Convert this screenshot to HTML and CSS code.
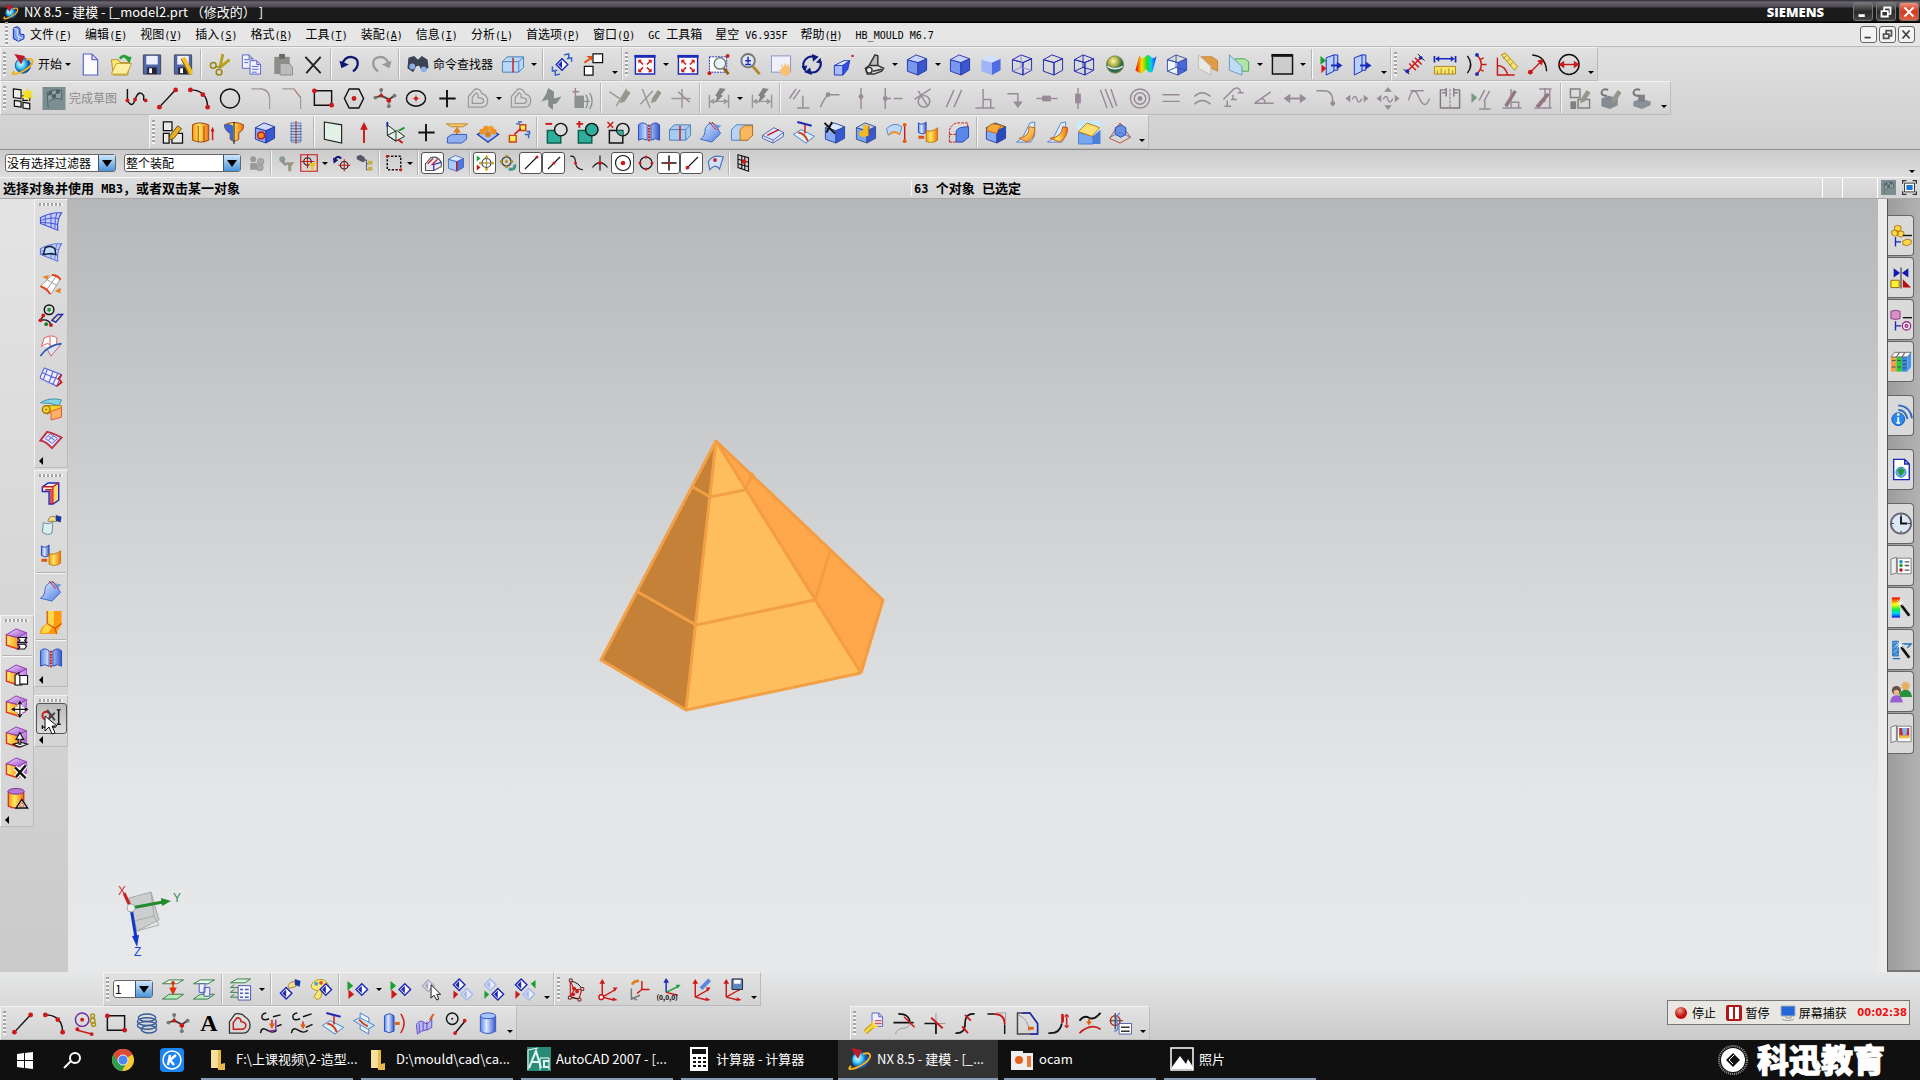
FILE: index.html
```html
<!DOCTYPE html>
<html lang="zh-CN">
<head>
    <meta charset="UTF-8">
    <meta name="viewport" content="width=device-width, initial-scale=1.0">
    <title>NX 8.5 - 建模</title>
    <link rel="stylesheet" href="styles.css">
</head>
<body>
    <svg class="defs" aria-hidden="true">
        <defs>
            <linearGradient id="blue" x1="0" x2="1" y2="1"><stop offset="0" stop-color="#e4eeff"/><stop offset="1" stop-color="#4a7ae0"/></linearGradient>
            <linearGradient id="tube"><stop offset="0" stop-color="#5a86e8"/><stop offset=".4" stop-color="#dce8ff"/><stop offset="1" stop-color="#3358cc"/></linearGradient>
            <linearGradient id="gold" x1="0" x2="1" y2="1"><stop offset="0" stop-color="#fff3a0"/><stop offset="1" stop-color="#f08a18"/></linearGradient>
            <linearGradient id="goldx"><stop offset="0" stop-color="#f59a10"/><stop offset=".4" stop-color="#ffe860"/><stop offset="1" stop-color="#f07010"/></linearGradient>
            <linearGradient id="goldl"><stop offset="0" stop-color="#fff080"/><stop offset="1" stop-color="#ff9a10"/></linearGradient>
            <linearGradient id="purple" x1="0" x2="1" y2="1"><stop offset="0" stop-color="#f0dcfc"/><stop offset="1" stop-color="#9848c8"/></linearGradient>
            <linearGradient id="rain"><stop offset="0" stop-color="#e00"/><stop offset=".3" stop-color="#fd0"/><stop offset=".55" stop-color="#2d2"/><stop offset=".75" stop-color="#0cf"/><stop offset="1" stop-color="#22f"/></linearGradient>
            <linearGradient id="rainy" x2="0" y2="1"><stop offset="0" stop-color="#e00"/><stop offset=".35" stop-color="#ff0"/><stop offset=".6" stop-color="#1e4"/><stop offset=".8" stop-color="#0cf"/><stop offset="1" stop-color="#11d"/></linearGradient>
            <radialGradient id="globe" cx=".35" cy=".4"><stop offset="0" stop-color="#e8fbff"/><stop offset=".6" stop-color="#40c8f4"/><stop offset="1" stop-color="#0a58bc"/></radialGradient>
            <radialGradient id="ball" cx=".4" cy=".3"><stop offset="0" stop-color="#fff8b0"/><stop offset=".5" stop-color="#b8b848"/><stop offset="1" stop-color="#2c6a50"/></radialGradient>
            <radialGradient id="red" cx=".4" cy=".3"><stop offset="0" stop-color="#f0a090"/><stop offset="1" stop-color="#c01010"/></radialGradient>
        </defs>
    </svg>

    <header class="titlebar">
        <span class="icon small" data-icon="nx"></span>
        <h1>NX 8.5 - 建模 - [_model2.prt （修改的） ]</h1>
        <span class="brand">SIEMENS</span>
        <div class="window-buttons">
            <button aria-label="最小化"><svg viewBox="0 0 20 20"><path d="M5 14h7" stroke="#fff" stroke-width="3"/></svg></button>
            <button aria-label="还原"><svg viewBox="0 0 20 20"><path d="M5 9h7v6h-7zM8 8V5h7v7h-3" fill="none" stroke="#fff" stroke-width="2"/></svg></button>
            <button class="close" aria-label="关闭"><svg viewBox="0 0 20 20"><path d="M5 5l10 10M15 5L5 15" stroke="#fff" stroke-width="2"/></svg></button>
        </div>
    </header>

    <nav class="menubar">
        <i class="grip"></i>
        <span class="icon small" data-icon="part"></span>
        <button>文件<i>(<u>F</u>)</i></button>
        <button>编辑<i>(<u>E</u>)</i></button>
        <button>视图<i>(<u>V</u>)</i></button>
        <button>插入<i>(<u>S</u>)</i></button>
        <button>格式<i>(<u>R</u>)</i></button>
        <button>工具<i>(<u>T</u>)</i></button>
        <button>装配<i>(<u>A</u>)</i></button>
        <button>信息<i>(<u>I</u>)</i></button>
        <button>分析<i>(<u>L</u>)</i></button>
        <button>首选项<i>(<u>P</u>)</i></button>
        <button>窗口<i>(<u>O</u>)</i></button>
        <button><i>GC </i>工具箱</button>
        <button>星空<i> V6.935F</i></button>
        <button>帮助<i>(<u>H</u>)</i></button>
        <button><i>HB_MOULD M6.7</i></button>
        <div class="doc-buttons">
            <button aria-label="最小化文档"><svg viewBox="0 0 17 17"><path d="M4 12h7" stroke="#444" stroke-width="2"/></svg></button>
            <button aria-label="还原文档"><svg viewBox="0 0 17 17"><path d="M4 8h6v5H4zM7 7V4h6v6h-2" fill="none" stroke="#555" stroke-width="2"/></svg></button>
            <button aria-label="关闭文档"><svg viewBox="0 0 17 17"><path d="M4 4l8 9M12 4l-8 9" stroke="#444" stroke-width="2"/></svg></button>
        </div>
    </nav>

    <div class="bars">
        <div class="bar-row">
            <div class="toolbar" data-tools="nx:开始 v new open save saveas | cut copy paste del | undo redo | find:命令查找器 movebox v | refresh windows V"></div>
            <div class="toolbar" data-tools="fit v fit zoombox zoom pan rotate persp orient v shaded v shaded soft wirehid wiregray wire ball rainbow facecube cliporange clipgreen v swatch v | doorin doorout V"></div>
            <div class="toolbar" data-tools="mdist mruler marc mangle mradius mdiam V"></div>
        </div>
        <div class="bar-row">
            <div class="toolbar" data-tools="sketch flag:完成草图 profile line arc circle fillet chamfer rect hex spline ellipse plus offset v offset gmirror gcyl | trima trimb trimc | dim v dim | cperp cpoint cmid con ctan cpar cright cdown chor cver cpar3 cconc ceq cequal carcs cangle charrow cfix cwave cfour ccurve cmirror cauto cdel cshow | gedit gproj gpress V"></div>
        </div>
        <div class="bar-row indent">
            <div class="toolbar" data-tools="editsk extrude revolve hole thread | plane vector csys plus emboss pattern instance | subtract unite intersect seam splitbody sheet patch trimbody projcurve delcube split wrap copyface draft | blend flange flange2 chamferb shell V"></div>
        </div>
    </div>

    <div class="selection-bar">
        <span class="combo filter"><select aria-label="类型过滤器"><option>没有选择过滤器</option></select></span>
        <span class="combo scope"><select aria-label="选择范围"><option>整个装配</option></select></span>
        <div class="toolset" data-tools="gparts | gfilter crossbox v undopick chain | lasso v | *snapface snapcube | *snapall snapopt *endpt *midpt ctrlpt interpt *center quad *existing *oncurve onface | grid"></div>
        <button class="drop tail" aria-label="更多"></button>
    </div>

    <div class="status">
        <p class="cue">选择对象并使用<i> MB3</i>，或者双击某一对象</p>
        <p class="message"><i>63 </i>个对象<i> </i>已选定</p>
        <span class="cell"></span>
        <span class="cell wide"></span>
        <div class="toolset" data-tools="flag full"></div>
    </div>

    <main>
        <div class="dock">
            <div class="dock-col first">
                <div class="toolbar vertical" data-tools="ccut | ccopy cmove cpull cdelete cyl V"></div>
            </div>
            <div class="dock-col">
                <div class="toolbar vertical" data-tools="mesh meshsel ruled curves sweep meshred roll meshframe V"></div>
                <div class="toolbar vertical" data-tools="angle3d hand copyface | sheet tube | seam V"></div>
                <div class="toolbar vertical last" data-tools="*hide V"></div>
            </div>
            <svg class="cursor" viewBox="0 0 14 20" aria-hidden="true"><path d="M1 1v15l4-4 3 7 3-1-3-7h5z" fill="#fff" stroke="#111"/></svg>
        </div>

        <div class="viewport">
            <svg class="solid" viewBox="600 440 284 272">
                <path d="M715 441L600 660L685 710z" fill="#c58138"/>
                <path d="M715 441L685 710L860 673z" fill="#ffbe5e"/>
                <path d="M715 441L860 673L882 600z" fill="#ffa84b"/>
                <g fill="none" stroke="#f2a046" stroke-width="3" stroke-linejoin="round">
                    <path d="M715 441L600 660L685 710L860 673"/>
                    <path d="M715 441L685 710M692 487L709 497L744 490M637 592L695 625L814 600"/>
                    <path d="M860 673L882 600L715 441L860 673M744 490L752 473M814 600L829 551" stroke="#f49c42"/>
                </g>
            </svg>
            <svg class="triad" viewBox="112 882 72 80">
                <path d="M128 898l22-6 8 28-22 11z" fill="#c4c8c8" stroke="#999" opacity=".8"/>
                <path d="M133 921l20-5 5 9-22 6zM150 892l3 24" fill="none" stroke="#aaa"/>
                <path d="M130 908l-7-15" stroke="#c82020" stroke-width="3"/>
                <path d="M130 908l32-6" stroke="#228a2c" stroke-width="3"/><path d="M160 898l10 3-9 5z" fill="#228a2c"/>
                <path d="M130 908l5 30" stroke="#1138cc" stroke-width="3"/><path d="M131 936l7-1-2 12z" fill="#1138cc"/>
                <circle cx="130" cy="908" r="4" fill="#eee" stroke="#aaa"/>
                <text x="117" y="895" fill="#c33">X</text><text x="172" y="902" fill="#3a8a4a">Y</text><text x="133" y="956" fill="#24d">Z</text>
            </svg>
        </div>

        <aside class="resources">
            <button aria-label="装配导航器" data-icon="rasm"></button>
            <button aria-label="约束导航器" data-icon="rcon"></button>
            <button aria-label="部件导航器" data-icon="rpart"></button>
            <button class="spaced" aria-label="重用库" data-icon="rlib"></button>
            <button class="spaced" aria-label="HD3D 工具" data-icon="rinfo"></button>
            <button class="spaced" aria-label="浏览器" data-icon="rweb"></button>
            <button aria-label="历史记录" data-icon="rclock"></button>
            <button aria-label="系统材料" data-icon="rlist"></button>
            <button aria-label="可视化" data-icon="rcolor"></button>
            <button aria-label="加工向导" data-icon="rmill"></button>
            <button aria-label="角色" data-icon="rpeople"></button>
            <button aria-label="系统场景" data-icon="rscene"></button>
        </aside>
    </main>

    <footer class="bottom">
        <div class="bar-row layers">
            <div class="toolbar">
                <span class="combo layer"><select aria-label="工作图层"><option>1</option></select></span>
                <div class="toolset" data-tools="layer layercopy | layerlist v | handdia palette | showhide v showhide dsel dia1 dia2 dia3 V"></div>
            </div>
            <div class="toolbar" data-tools="wcsdyn wcs1 wcs2 wcs0 wcs3 wcs4 V"></div>
        </div>
        <div class="bar-row">
            <div class="toolbar" data-tools="line arc circline rect helix spline text offsetr bridge bridge2 projcurve inter tubewrap wave circtan cylinder V"></div>
            <div class="toolbar edit-curve" data-tools="wrench etrim etrim2 esplit efillet estretch elength esmooth etemplate V"></div>
            <div class="recorder">
                <button><svg viewBox="0 0 16 16"><circle cx="8" cy="8" r="6" fill="url(#red)"/></svg>停止</button>
                <button><svg viewBox="0 0 16 16"><rect width="16" height="16" rx="2" fill="#b01818"/><path d="M5 2v12M11 2v12" stroke="#fff" stroke-width="4"/></svg>暂停</button>
                <button><svg viewBox="0 0 16 16"><path d="M1 1h14v10H1z" fill="#2468d8" stroke="#aab"/><path d="M6 11v2h5v-2M2 14c3 2 9 2 12 0" fill="none" stroke="#999"/></svg>屏幕捕获</button>
                <time>00:02:38</time>
            </div>
        </div>
    </footer>

    <div class="taskbar">
        <button class="launch" aria-label="开始菜单"><svg viewBox="0 0 24 24"><path d="M4 6l7-1v7H4zM12 5l8-1v8h-8zM4 13h7v7l-7-1zM12 13h8v8l-8-1z" fill="#fff"/></svg></button>
        <button class="launch" aria-label="搜索"><svg viewBox="0 0 24 24"><path d="M2 20l7-7" stroke="#fff" stroke-width="2"/><circle cx="13" cy="10" r="5" fill="none" stroke="#fff" stroke-width="2"/></svg></button>
        <button class="launch" aria-label="Chrome"><svg viewBox="0 0 24 24"><circle cx="12" cy="12" r="11" fill="#f8cc30"/><path d="M12 12L2.500 6.500A11 11 0 0 1 21.500 6.500z" fill="#dd4a38"/><path d="M12 7h9.800A11 11 0 0 0 2.500 6.500L7 14z" fill="#dd4a38"/><path d="M2.500 6.500A11 11 0 0 0 11 23l5-9-8 1z" fill="#2e9e4c"/><circle cx="12" cy="12" r="5" fill="#4a86f0" stroke="#eee"/></svg></button>
        <button class="launch" aria-label="酷狗音乐"><svg viewBox="0 0 24 24"><rect width="24" height="24" rx="4" fill="#1c84f0"/><circle cx="12" cy="12" r="9" fill="none" stroke="#fff" stroke-width="1.500"/><path d="M10 7l-2 10M16 7l-6 5 4 5" fill="none" stroke="#fff" stroke-width="2.500"/></svg></button>
        <button class="task" data-icon="tfolder"><span>F:\上课视频\2-造型...</span></button>
        <button class="task" data-icon="tfolder"><span>D:\mould\cad\ca...</span></button>
        <button class="task" data-icon="tacad"><span>AutoCAD 2007 - [...</span></button>
        <button class="task" data-icon="tcalc"><span>计算器 - 计算器</span></button>
        <button class="task active" data-icon="nx"><span>NX 8.5 - 建模 - [_...</span></button>
        <button class="task" data-icon="tocam"><span>ocam</span></button>
        <button class="task" data-icon="tphoto"><span>照片</span></button>
        <div class="watermark">
            <svg viewBox="0 0 32 32"><circle cx="16" cy="16" r="14" fill="none" stroke="#999" stroke-width="2" stroke-dasharray="1 1"/><circle cx="16" cy="16" r="12" fill="#fff"/><path d="M16 9l7 7-7 7-7-7z" fill="#111"/><path d="M17 11l-5 5 4 4" fill="none" stroke="#fff"/></svg>
            <span>科迅教育</span>
        </div>
    </div>
    <script src="toolbars.js"></script>
</body>
</html>
```

FILE: styles.css
```css
* {
    box-sizing: border-box;
}
body {
    margin: 0;
    height: 100vh;
    display: flex;
    flex-direction: column;
    overflow: hidden;
    background: #dcdcdc;
    font: 12px/16px "Noto Sans CJK SC", sans-serif;
    color: #000;
}
button, select {
    font: inherit;
    color: inherit;
    padding: 0;
    border: 0;
    background: none;
}
i {
    font-style: normal;
}
svg {
    display: block;
    overflow: visible;
}
.defs {
    position: absolute;
    width: 0;
    height: 0;
}

/* title bar */
.titlebar {
    height: 23px;
    display: flex;
    align-items: center;
    padding: 0 1px 0 3px;
    background: linear-gradient(#2a262c 0, #6a6670 2px, #4a474e 7px, #1b1b1b 8px, #1b1b1b 21px, #000 22px);
    color: #fff;
}
.titlebar h1 {
    flex: 1;
    margin: 0 0 0 5px;
    font-size: 13px;
    font-weight: normal;
    white-space: pre;
}
.brand {
    font: 800 13px "Open Sans", sans-serif;
    margin-right: 29px;
}
.icon.small svg {
    width: 16px;
    height: 16px;
}
.window-buttons {
    display: flex;
    gap: 3px;
}
.window-buttons button {
    width: 20px;
    height: 19px;
    border: 1px solid #777;
    border-radius: 3px;
    background: linear-gradient(#777, #2a2a2a 50%, #444);
}
.window-buttons .close {
    background: linear-gradient(#f09080, #d03a20 50%, #e06040);
}

/* menu */
.menubar {
    height: 24px;
    display: flex;
    align-items: center;
    padding: 0 5px 1px 3px;
    gap: 13px;
    background: #e6e6e6;
    border-bottom: 1px solid #bbb;
}
.menubar .grip {
    margin-right: -13px;
}
.menubar .icon {
    margin: 0 -9px 0 2px;
}
.menubar > button {
    white-space: pre;
}
.menubar > button i, .status i {
    font: 10px "DejaVu Sans Mono", monospace;
}
.doc-buttons {
    margin-left: auto;
    display: flex;
    gap: 2px;
}
.doc-buttons button {
    width: 17px;
    height: 17px;
    border: 1px solid #666;
    border-radius: 3px;
    background: #f4f4f4;
}

/* toolbars */
.bars {
    background: linear-gradient(#e0e0e0, #cecece);
}
.bar-row {
    display: flex;
    height: 34px;
}
.bar-row.indent {
    padding-left: 149px;
}
.toolbar {
    display: flex;
    align-items: center;
    border: 1px solid;
    border-color: #f2f2f2 #bbb #bbb #f2f2f2;
    background: linear-gradient(#e2e2e2, #d2d2d2);
}
.toolbar::before, .grip {
    content: "";
    width: 3px;
    height: 24px;
    margin: 0 1px 0 2px;
    background: repeating-linear-gradient(#a4a4a4 0 2px, #f4f4f4 2px 4px);
}
.toolset {
    display: flex;
    align-items: center;
}
.tool {
    width: 31px;
    height: 30px;
    display: flex;
    align-items: center;
    justify-content: center;
    flex: none;
    border-radius: 3px;
}
.tool svg {
    width: 24px;
    height: 23px;
    flex: none;
}
.tool.labelled {
    width: auto;
    padding-left: 4px;
    padding-right: 4px;
    gap: 3px;
    white-space: nowrap;
}
.tool.labelled + .drop {
    margin-left: -4px;
}
.tool.off {
    color: #8c8c8c;
}
.tool.pressed {
    border: 1px solid #555;
    background: #fff;
}
.sep {
    width: 2px;
    height: 30px;
    margin: 0 2px;
    border-left: 1px solid #b4b4b4;
    border-right: 1px solid #f8f8f8;
}
.drop {
    width: 12px;
    height: 30px;
    display: flex;
    align-items: center;
    justify-content: center;
}
.drop::after {
    content: "";
    border: 3px solid transparent;
    border-top-color: #000;
    border-bottom: 0;
}
.drop.tail {
    width: 13px;
    align-items: flex-end;
    padding-bottom: 5px;
}

/* combo boxes */
.combo {
    position: relative;
    height: 18px;
    border: 1px solid #666;
    border-radius: 3px;
    background: #fff;
}
.combo select {
    appearance: none;
    width: 100%;
    height: 16px;
    line-height: 16px;
    padding-left: 1px;
    outline: 0;
}
.combo::before {
    content: "";
    position: absolute;
    right: 0;
    top: 0;
    width: 16px;
    height: 16px;
    background: linear-gradient(#cfe6fa, #4a94dc);
    border-left: 1px solid #357;
    pointer-events: none;
}
.combo::after {
    content: "";
    position: absolute;
    right: 3px;
    top: 5px;
    border: 5px solid transparent;
    border-top: 7px solid #000;
    border-bottom: 0;
    pointer-events: none;
}
.combo.filter {
    width: 111px;
    margin-right: 8px;
}
.combo.scope {
    width: 117px;
    margin-right: 4px;
}
.combo.layer {
    width: 40px;
    margin: 0 4px 0 3px;
}

/* selection bar */
.selection-bar {
    height: 28px;
    display: flex;
    align-items: center;
    padding: 0 0 1px 5px;
    border-top: 1px solid #8c8c8c;
    background: linear-gradient(#cbcbcb, #dedede);
}
.selection-bar .tool {
    width: 23px;
    height: 22px;
}
.selection-bar .tool svg {
    width: 18px;
    height: 18px;
}
.selection-bar .sep {
    height: 24px;
}
.selection-bar .drop {
    width: 10px;
}
.selection-bar > .tail {
    margin-left: auto;
    margin-right: 3px;
}

/* cue and status line */
.status {
    height: 22px;
    display: flex;
    align-items: center;
    padding-bottom: 1px;
    border-top: 1px solid #f4f4f4;
    border-bottom: 1px solid #a8a8a8;
    background: linear-gradient(#dedede, #d4d4d4);
    font-size: 13px;
    font-weight: bold;
    white-space: pre;
}
.status i {
    font-size: 12px;
    font-weight: bold;
}
.status p {
    margin: 0;
}
.cue {
    width: 911px;
    padding-left: 3px;
}
.message {
    flex: 1;
    border-left: 1px solid #f6f6f6;
    padding-left: 2px;
}
.cell {
    width: 20px;
    height: 20px;
    border-left: 1px solid #fff;
}
.cell.wide {
    width: 35px;
}
.status .toolset {
    width: 43px;
    border-left: 1px solid #fff;
}
.status .tool {
    width: 21px;
    height: 20px;
}
.status .tool svg {
    width: 15px;
    height: 15px;
}

/* work area */
main {
    flex: 1;
    display: flex;
    min-height: 0;
}
.dock {
    position: relative;
    display: flex;
    background: linear-gradient(#e4e4e4, #cacaca);
}
.dock-col {
    width: 34px;
}
.dock-col.first {
    padding-top: 416px;
}
.toolbar.vertical {
    flex-direction: column;
    background: linear-gradient(#dedede, #d4d4d4);
    margin-bottom: 2px;
}
.toolbar.vertical.last {
    margin-top: 8px;
}
.vertical::before {
    width: 24px;
    height: 3px;
    margin: 3px 0 1px;
    background: repeating-linear-gradient(90deg, #a4a4a4 0 2px, #f4f4f4 2px 4px);
}
.vertical .tool {
    height: 31px;
}
.vertical .tool.pressed {
    background: linear-gradient(#bbb, #ddd);
}
.vertical .sep {
    width: 30px;
    height: 2px;
    margin: 1px 0 2px;
    border: 0;
    border-top: 1px solid #b4b4b4;
    border-bottom: 1px solid #f8f8f8;
}
.vertical .drop {
    width: 24px;
    height: 12px;
    padding: 0;
    align-items: center;
    justify-content: flex-start;
}
.vertical .drop::after {
    border: 4px solid transparent;
    border-right-color: #000;
    border-left: 0;
}
.cursor {
    position: absolute;
    left: 44px;
    top: 516px;
    width: 14px;
    height: 20px;
}
.viewport {
    flex: 1;
    position: relative;
    border-right: 9px solid #ececec;
    background: linear-gradient(#b6b7b8, #d3d4d6 45%, #e5e6e8 77%, #e7e8ea);
}
.solid {
    position: absolute;
    left: 533px;
    top: 241px;
    width: 284px;
    height: 272px;
}
.triad {
    position: absolute;
    left: 45px;
    top: 683px;
    width: 72px;
    height: 80px;
    font: 12px "Liberation Sans", sans-serif;
}

/* resource bar */
.resources {
    width: 33px;
    padding-top: 16px;
    border-left: 1px solid #555;
    border-bottom: 2px solid #777;
    background: linear-gradient(90deg, #9c9c9c, #b2b2b2);
}
.resources button {
    display: flex;
    align-items: center;
    justify-content: center;
    width: 26px;
    height: 41px;
    margin-bottom: 1px;
    border: 1px solid #666;
    border-left: 0;
    border-radius: 0 4px 4px 0;
    background: #dadada;
}
.resources button.spaced {
    margin-bottom: 13px;
}
.resources svg {
    width: 22px;
    height: 23px;
}

/* bottom bars */
.bottom {
    background: linear-gradient(#e6e7e8, #cacaca);
}
.bar-row.layers {
    padding-left: 103px;
}
.edit-curve {
    margin-left: 333px;
}
.recorder {
    display: flex;
    align-items: center;
    align-self: center;
    width: 243px;
    height: 25px;
    margin: -21px 10px 0 auto;
    padding: 0 2px 0 5px;
    border: 1px solid #777;
    background: #e9e7e1;
    justify-content: space-between;
}
.recorder button {
    display: flex;
    align-items: center;
    gap: 3px;
}
.recorder svg {
    width: 16px;
    height: 16px;
}
.recorder time {
    font: bold 10px "DejaVu Sans", sans-serif;
    color: #f01010;
}

/* taskbar */
.taskbar {
    height: 40px;
    display: flex;
    align-items: stretch;
    background: #101010;
    color: #fff;
}
.launch {
    width: 49px;
    display: flex;
    align-items: center;
    justify-content: center;
}
.launch svg {
    width: 24px;
    height: 24px;
}
.launch + .task {
    margin-left: 5px;
}
.task {
    display: flex;
    align-items: center;
    gap: 5px;
    width: 152px;
    margin-right: 8px;
    padding-left: 6px;
    border-bottom: 2px solid #8a9bb4;
    font-size: 13px;
    white-space: nowrap;
}
.task svg {
    width: 24px;
    height: 24px;
}
.task.active {
    width: 160px;
    margin-right: 6px;
    padding-left: 10px;
    margin-left: -3px;
    background: #333;
}
.watermark {
    display: flex;
    align-items: center;
    gap: 8px;
    margin-left: auto;
    margin-right: 35px;
    font-size: 32px;
    line-height: 36px;
    font-weight: 900;
    -webkit-text-stroke: 1px #fff;
}
.watermark span {
    padding-bottom: 4px;
}
.watermark svg {
    width: 32px;
    height: 32px;
}
```

FILE: toolbars.js
```js
const K = '#111', R = '#cc1818', B = '#1c28b8', G = '#999', M = '#988a98';

const P = (d, s = K, f = 'none', w = 1.5) => `<path d="${d}" stroke="${s}" fill="${f}" stroke-width="${w}"/>`;
const F = (d, f) => `<path d="${d}" fill="${f}"/>`;
const D = (x, y, c = R, r = 2) => `<circle cx="${x}" cy="${y}" r="${r}" fill="${c}"/>`;
const C = (x, y, r, s = K, f = 'none', w = 1.5) => `<circle cx="${x}" cy="${y}" r="${r}" stroke="${s}" fill="${f}" stroke-width="${w}"/>`;
const box = (a, b, c, s) => P('M2 7L13 10V23L2 19z', s, a, 1) + P('M13 10L22 6V18L13 23z', s, b, 1) + P('M2 7L11 2L22 6L13 10z', s, c, 1);
const page = (x, y) => P(`M${x} ${y}h7l4 4v10h-11zM${x + 7} ${y}v4h4`, '#5a62c8', '#eef2ff', 1);
const floppy = P('M3 2h18v20H3z', '#445', '#5068a8', 1) + F('M6 3h12v9H6z', '#eef') + F('M7 15h10v7H7z', '#223') + F('M9 16h3v5H9z', '#fff');
const diamond = (x, y, s = B, f = '#fff') => P(`M${x} ${y - 6}l6 6-6 6-6-6z`, s, f, 1.5) + F(`M${x} ${y - 4}v8l-4-4z`, s);
const pale = (x, y) => diamond(x, y, '#a8b8e8', '#e6eeff');
const arrowG = F('M1 3l6 5-6 5z', '#18a030'), arrowR = F('M2 12l6 5-6 5z', R);
const pencil = F('M10 15L18 5l4 3-8 10-5 2z', '#e8b020') + P('M10 15L18 5l4 3-8 10-5 2z', '#6a5010', 'none', 1);
const gpencil = F('M13 12l6-9 4 3-6 9-5 2z', '#96968a');
const wall = P('M2 3h9v9H2zM2 14h5v8H2zM9 14h13v8H9z', K, '#e8e8e8', 1.3);
const cyan = '#b8d8f8';
const diaCube = P('M1 8L13 11V23L1 19z', '#e03818', 'url(#goldl)') + P('M13 11L22 6V18L13 23z', '#b050c8', 'url(#purple)', 1) + P('M1 8L11 2L22 6L13 11z', '#9038b0', 'url(#purple)', 1);
const vaxes = P('M6 20V4M6 20l14-8M6 20l12 3', R) + F('M6 1l3 5H3zM22 10l-5 0 2 4zM22 23l-5-3v4z', R);
const sheetD = f => P('M6 8C9 1 15 1 17 5L22 13L13 22L1 19Q6 16 6 8z', '#3a6ac8', f, 1);
const book = F('M1 5l6-2v17l-6 2z', '#eee') + P('M1 5l6-2v17l-6 2z', '#777', 'none', 1) + P('M8 4h15v17H8z', '#777', '#fff', 1);
const layerS = P('M1 6l7-4h15l-7 4z', '#3a7a4a', '#e8fae8', 1) + P('M1 22l7-5h15l-7 5z', '#3a7a4a', '#b8eeb8', 1);
const wand = P('M12 9l9 12', K, 'none', 3) + P('M11 3v8M7 7h8M8 4l6 6M14 4l-6 6', '#fff', 'none', 1);
const net = s => P('M1 7Q12 1 23 2Q18 9 19 20L1 13z', s, '#c4d0fc', 1.2) + P('M1 10Q12 6 20 8M1 12Q10 12 19 14M6 5v10M12 3v14M18 2q-2 6-2 16', s, 'none', 1);

const icons = {
    nx: C(12, 13, 8, '#1060b0', 'url(#globe)', 1) + P('M3 19Q-2 24 8 21Q23 14 22 8Q21 5 15 7', '#f0b020', 'none', 2) + F('M3 1l11 2-4 9z', '#c01828'),
    part: P('M5 3l6-2 4 3v8l6 1v6l-8 4-8-4z', B, '#78a0f0') + P('M5 3l6 3v9l8 4M13 22v-6', '#e0ecff'),
    new: P('M5 1h9l6 6v16H5zM14 1v6h6', '#5560cc', '#fafaff', 1.2),
    open: P('M2 7h7l2 3h10l-2 13H4z', '#b89020', '#ffe878', 1) + P('M2 22L7 11h16l-5 11z', '#c0a030', '#fff0a0', 1) + P('M11 6Q14 1 19 5', '#28a038', 'none', 3) + F('M15 4l8 0-2 7z', '#28a038'),
    save: floppy,
    saveas: floppy + F('M10 6l4-2 8 15-1 4-4-2z', '#f4c020') + P('M10 6l8 15', '#805010', 'none', 1),
    cut: P('M12 15L15 1M12 15L22 7', '#b8a020', 'none', 3) + C(5, 13, 3, '#988410') + C(11, 20, 3, '#988410') + P('M7 14l6 1', '#988410'),
    copy: page(3, 2) + page(11, 8) + P('M5 7h6M5 10h4M13 14h7M13 17h7M13 20h5', '#5a62c8', 'none', 1),
    paste: F('M4 4h16v18H4z', '#8c8c88') + F('M9 1h6v5H9z', '#666') + P('M10 11h10l3 4v8H10z', '#8c8c8c', '#bbb', 1),
    del: P('M4 4L20 21M20 4L5 21', '#222', 'none', 2),
    undo: P('M4 12Q6 4 13 4Q21 5 20 12Q19 17 15 19', '#101870', 'none', 2.5) + F('M1 8l2 8 8-4z', '#101870'),
    redo: P('M20 12Q18 4 11 4Q3 5 4 12Q5 17 9 19', '#999', 'none', 2.5) + F('M23 8l-2 8-8-4z', '#999'),
    find: F('M2 5l6-2 4 4 4-4 6 4 1 8-6 5-4-7-3 1-3 6-6-4z', '#3a4254') + D(6, 14, '#8ab0e8', 3) + D(18, 17, '#8ab0e8', 3),
    movebox: P('M1 9l5-5h17v11l-5 5H1zM1 9h17v11M18 9l5-5', '#4a80b8', cyan, 1) + P('M12 5v15', R),
    refresh: diamond(12, 12) + P('M14 2l5-1v4M17 6l5-1v4M10 22l-5 1v-5M7 18l-5 1v-5', '#3060c8'),
    windows: P('M12 1h10v9H12zM3 14h9v9H3z', K, '#fff', 1.3) + P('M3 10l6-4', '#e05010', 'none', 2) + F('M5 3h6v5z', '#e05010'),
    fit: P('M2 3h20v19H2z', B, '#fff', 1.5) + F('M1 2h22v3H1z', B) + P('M10 12L6 8M14 12l4-4M10 15l-4 4M14 15l4 4', R) + F('M5 7h4l-4 4zM19 7h-4l4 4zM5 20v-4l4 4zM19 20v-4l-4 4z', R),
    zoombox: `<path d="M2 4h18v16H2z" fill="#fff" stroke="${B}" stroke-dasharray="2 1"/>` + C(13, 11, 6, '#777', '#e8f4f8') + P('M17 16l5 6', '#8a6020', 'none', 3) + D(21, 3) + D(2, 21),
    zoom: C(10, 8, 7, '#777', '#dfe9f4', 2) + P('M15 14l7 8', '#b08828', 'none', 3) + P('M10 4v7M7 8h6M7 12h6', B),
    pan: P('M2 3h20v17H2z', '#8a90c8', '#f0f0fa', 1) + F('M13 23l-3-6 3 0-1-6 3 4 1-5 2 4 2-3 2 8-3 5z', '#f8c070'),
    rotate: P('M4 17A9 9 0 0 1 14 4M20 7A9 9 0 0 1 10 20', '#101c80', 'none', 2.2) + F('M12 1l7 3-6 5zM12 23l-8-3 6-5zM1 14l6-1-2 7zM22 11l-6-1 5-5z', '#101c80'),
    persp: P('M3 13h9v10H3z', '#2338c8', '#a8bcff', 1) + P('M3 13l10-5h6l-7 5z', '#2338c8', '#dfe8ff', 1) + P('M12 13l7-5-2 9-5 6z', '#2338c8', '#2f50e0', 1) + D(22, 3, R, 1.3),
    orient: P('M7 13L13 2l3 1v10', '#333', '#bbb') + P('M3 16l4-3 9 0 6 3-2 3-8 3H5z', '#333', '#ddd') + C(7, 18, 3, '#333', '#eee') + P('M11 19l9-2', '#333'),
    shaded: box('#7898ee', '#3a58cc', '#c4d4fc', '#2838b0'),
    soft: box('#a0b4f6', '#4f6ce0', '#d4e0ff', 'none'),
    wirehid: box('none', 'none', 'none', B) + P('M11 2v13L2 19M11 15l11 3', '#8a90e0', 'none', 1),
    wiregray: box('none', 'none', 'none', B),
    wire: box('none', 'none', 'none', B) + P('M11 2v13L2 19M11 15l11 3', B, 'none', 1),
    ball: C(12, 12, 9, '#7a8a50', 'url(#ball)', 1) + P('M4 14Q12 19 20 14', '#e0e8f0'),
    rainbow: F('M1 18L5 3Q9 7 11 4Q15 0 17 4Q20 7 23 3L19 19Q16 22 13 18Q11 16 9 20Q6 23 1 18z', 'url(#rain)'),
    facecube: box('#eef4ff', '#4868dc', 'none', '#3850a8') + P('M11 2v13L2 19M11 15l11 3', '#3850a8', 'none', 1),
    cliporange: P('M5 4h11l6 4v11l-6-3H5z', '#c88430', '#e09a48', 1) + P('M2 2l13 12v9L2 16z', '#bbb', '#e8e8e4', 1),
    clipgreen: P('M8 6h10l4 3v10H8z', '#4aa84a', '#b0e4a8', 1) + P('M2 2l13 12v9L2 18z', '#6a98c8', '#c0dcf4', 1),
    swatch: P('M2 2h21v20H2z', K, '#ccc', 1.5) + F('M1 1h22v3H1z', K),
    doorin: P('M7 5l8-3v17l-8 4zM15 2h4v16h-4', B, '#b8d0ff', 1) + P('M12 13h8', B, 'none', 2) + F('M18 9l6 4-6 4z', B) + F('M1 3l6 5-6 4z', '#18a030') + F('M2 12l5 4-5 5z', R),
    doorout: P('M4 5l8-3v17l-8 4zM12 2h4v16h-4', B, '#b8d0ff', 1) + P('M10 13h8', B, 'none', 2) + F('M16 9l6 4-6 4z', B),
    mdist: P('M1 17l6 5M16 1l7 7', K, 'none', 1) + P('M5 19L19 5M7 11l7 7M10 8l7 7M13 5l7 7', R) + D(5, 19, B) + D(19, 5, B),
    mruler: P('M1 3v7M23 3v7M3 6h18', B, 'none', 1.8) + F('M6 3v6L2 6zM18 3v6l4-3z', B) + P('M1 14h22v8H1z', '#a88820', '#f8e468', 1) + P('M4 18v4M8 16v6M12 18v4M16 16v6M20 18v4', '#a88820', 'none', 1),
    marc: P('M3 3Q10 12 3 21', K) + P('M13 2Q22 12 13 22M16 7l4-2M18 12h5M16 17l4 2', R) + D(13, 2, B) + D(13, 22, B),
    mangle: P('M2 5v18h18M2 13Q10 13 13 23', R) + P('M6 2l4-2 13 14-3 4z', '#a88820', '#f8e468', 1) + P('M8 6l3-3M12 9l3-3M15 13l3-3', '#a88820', 'none', 1),
    mradius: P('M6 2Q20 3 21 19', K) + P('M4 20L16 8', R) + F('M18 6l-7 2 5 5z', R) + D(4, 20, R, 2.5),
    mdiam: C(12, 12, 10.5) + P('M3 12h18', R) + F('M1 12l6-4v8zM23 12l-6-4v8z', R),

    sketch: P('M2 2l8 1v9l-8-1zM12 9h7v5h-7zM3 14l7 1v6l-7-1zM12 16l7 1v6l-7-1z', K, '#eee', 1.3) + F('M17 0l1 5 5-2-3 5 4 2-5 1-1 4-3-4-5 1 3-4-3-4 5 1z', '#f4e020'),
    flag: F('M0 0h24v24H0z', '#7b8f92') + P('M6 22L5 6Q12 1 20 4V13Q13 10 7 15', '#4c5c60', '#8fa0a2', 1) + F('M6 6l4-2v4l-4 1zM14 3h4v4h-4zM10 8l4-1v4l-4 1z', '#4c5c60'),
    profile: P('M2 2v12Q7 23 10 13Q14 2 19 9V14', K) + D(2, 14) + D(10, 13) + D(21, 14),
    line: P('M3 21L19 4', K) + D(3, 21, R, 2.5) + D(20, 3, R, 2.5),
    arc: P('M3 3Q20 3 21 20', K) + D(3, 3, R, 2.5) + D(16, 8, R, 2.5) + D(21, 21, R, 2.5),
    circle: C(12, 12, 10),
    fillet: P('M2 2h10Q21 3 21 12V23', G, 'none', 1.2) + P('M12 2Q21 3 21 12', '#b09090', 'none', 1.2),
    chamfer: P('M2 2h12M21 10V23', G, 'none', 1.2) + P('M14 2l7 9', '#b07070', 'none', 1.2),
    rect: P('M3 4h18v15H3z') + D(3, 4, R, 2.5) + D(21, 19, R, 2.5),
    hex: P('M7 2h10l5 10-5 10H7L2 12z') + D(12, 12, R, 2.5),
    spline: P('M2 11L8 9L16 13L22 9', '#444', 'none', 2) + P('M8 9V3M16 13V20', '#888') + D(8, 3, '#777') + D(2, 11, '#777') + D(8, 9) + D(16, 14, R, 2.5) + D(22, 9, '#777') + D(16, 20, '#777'),
    ellipse: '<ellipse cx="12" cy="12" rx="10" ry="8" fill="none" stroke="#111" stroke-width="1.5"/>' + P('M12 8v8M8 12h8', '#d88', 'none', 1) + D(12, 12),
    plus: P('M12 3v18M4 12h17', K, 'none', 2),
    offset: P('M2 21V10L9 2Q15 2 16 7Q23 9 22 16Q21 20 17 21z', G, 'none', 1.3) + P('M6 17V11L10 6Q13 7 12 11Q18 11 18 15Q17 17 15 17z', G, 'none', 1.3),
    gmirror: F('M8 1l6 4v7l8-2-5 7-4 1v6l-5-4v-7l-7 2 5-8z', '#858c8c'),
    gcyl: F('M3 9h10v13H3z', '#8c9292') + P('M4 1v8M1 5h7', '#a08888') + P('M15 8Q19 15 15 22M19 6Q24 15 19 23M13 15h6', '#8c9292'),
    trima: P('M1 5l12 8M8 20L19 2', G) + gpencil,
    trimb: P('M3 2l8 20M1 18L14 4', G) + gpencil,
    trimc: P('M1 12h20M12 2v20', G) + P('M8 5l12 11', '#a08888'),
    dim: P('M2 8v14M22 8v14M4 15h16', G) + F('M2 15l5-3v6zM22 15l-5-3v6z', G) + F('M13 1l6 1-5 6 2 1-8 8 2-7-2-1z', '#808482'),
    cperp: P('M2 12L9 2M6 13L13 3M16 9v13M10 22h13', M),
    cpoint: P('M2 21Q5 13 10 8H22', M) + D(10, 8, M, 2.5),
    cmid: P('M12 1v22', M) + D(12, 10, M, 2.5),
    con: P('M5 1v22M5 12h6M14 12h9', M) + D(5, 12, M, 2.5),
    ctan: C(13, 15, 6, M) + P('M3 13L20 2M7 4l10 16', M),
    cpar: P('M4 21L12 3M12 21L20 3', M),
    cright: P('M2 22h20M10 2v20M10 13h8v9', M),
    cdown: P('M3 7h11V20', M) + F('M9 15h10l-5 7z', M),
    chor: P('M1 12h22', M) + F('M7 9h9v6H7z', M),
    cver: P('M12 1v22', M) + F('M9 7h6v10H9z', M),
    cpar3: P('M3 3l7 19M8 2l8 20M14 2l6 18', M),
    cconc: C(12, 12, 10, M) + C(12, 12, 6, M) + D(12, 12, M, 2.5),
    ceq: P('M3 8h18M3 15h18', M),
    cequal: P('M4 10Q12 2 21 10M4 18Q12 10 21 18', M),
    carcs: P('M2 13L13 2Q19 -1 20 6M17 6h6M12 8v5M10 13h6M6 14v6M3 20h7', M),
    cangle: P('M2 17L19 5M2 17h20M9 12Q14 13 13 17', M),
    charrow: P('M3 12h18', M, 'none', 2) + F('M0 12l7-5v10zM24 12l-7-5v10z', M),
    cfix: P('M2 4h8Q19 4 19 15v5', M) + D(19, 17, M, 2.5),
    cwave: P('M7 13q3-6 5 0t5-1', M) + F('M0 12l5-4v8zM24 12l-5-4v8z', M),
    cfour: P('M7 13q3-6 5 0t5-1', M) + F('M0 12l5-4v8zM24 12l-5-4v8zM12 0l4 5H8zM12 24l4-5H8z', M),
    ccurve: P('M1 14Q6 -4 12 11Q18 25 23 12M3 4h14', M),
    cmirror: P('M8 3H2v19h20V3h-6M8 1v9M16 1v9M4 6h3M20 6h-3', '#807880') + '<path d="M12 2v20" stroke="#807880" stroke-dasharray="3 1"/>',
    cauto: F('M2 6l6 5-6 6z', '#7a9a80') + P('M10 14L16 3M15 15L21 4M16 14v9M10 23h12', M),
    cdel: P('M2 22h20M11 2v20M12 16h7v6', M) + F('M14 3l3 2-10 16-3-2z', '#937680'),
    cshow: P('M3 22h18M8 2h13M19 2v20M14 1v15', M) + F('M16 6l3 2L8 22l-4-2z', '#937680'),
    gedit: P('M2 2h10v9H2zM10 13h12v9H10z', '#808080') + F('M2 15h6v8H2z', '#808080') + gpencil,
    gproj: F('M2 12l8-3 9 3v7l-8 4-9-3z', '#848a90') + P('M9 3Q3 1 2 6Q3 10 8 9', '#777', 'none', 2) + gpencil,
    gpress: F('M3 15l8-3 10 3v4l-9 4-9-3z', '#8a9098') + F('M8 8h7v7H8z', '#7c8288') + P('M10 3Q4 1 3 6Q4 10 9 9', '#777', 'none', 2),

    editsk: P('M3 1h9v9H3zM3 13h6v10H3zM12 13h11v10H12z', K, '#e8e8e8', 1.3) + pencil,
    extrude: P('M1 4Q8 0 18 4V20Q10 24 1 20z', '#a04010', 'url(#goldx)', 1) + P('M7 5v17M13 5v17', '#a04010', 'none', 1) + P('M22 20V9', R) + F('M22 6l2 5h-4z', R),
    revolve: P('M2 4Q12-1 22 4Q22 11 17 12V19Q12 23 8 19V13Q2 10 2 4z', '#a04010', 'url(#goldx)', 1) + F('M2 4Q7 2 11 5V21L8 19V13Q2 10 2 4z', '#3a68d8') + P('M12 1v23', K, 'none', 1),
    hole: box('#88a8f8', '#3858d0', '#d0dcff', '#2838a0') + C(8, 15, 3.5, R, '#f09020'),
    thread: P('M7 2h10v20H7z', '#6a88b8', '#b8cff0', 1) + P('M6 5h12M6 8h12M6 11h12M6 14h12M6 17h12M6 20h12', '#58709a', 'none', 1) + P('M12 0v24', R, 'none', 1),
    plane: P('M3 1L21 4V23L3 19z', '#222', '#e2f2e6', 1.2),
    vector: P('M12 23V6', R, 'none', 2) + F('M12 1l4 8H8z', R),
    csys: P('M4 4l9 7v10L4 15zM4 15l10-5 8 6-9 5z', '#222', '#e2f2e6', 1) + P('M4 6V1', B, 'none', 2) + P('M16 10l6-3', '#18a030', 'none', 2) + P('M15 19l5 4', R, 'none', 2),
    emboss: P('M1 3h22l-5 3H6z', '#c08020', '#ffd070', 1) + P('M12 7v10', '#e08020', 'none', 2) + F('M8 12l4-6 4 6z', '#e08020') + P('M2 17l5-3h15v5l-5 4H2z', '#3858b8', '#90b0f0', 1),
    pattern: P('M1 14l11-6 11 6-11 8z', '#2848b8', '#a8c4f8') + D(6, 11, '#f09020', 3) + D(10, 8, '#f09020', 3) + D(15, 8, '#f0a030', 3) + D(18, 11, '#f09020', 3) + D(12, 14, '#e08010', 3),
    instance: P('M2 15h7v7H2zM13 4h6v6h-6z', '#d04010', '#fff060') + P('M7 14l7-6', R) + P('M18 14h4v4M20 11h3v3M9 3h4M11 1h4', '#3060c8'),
    subtract: P('M3 10h14v13H3z', '#0a6050', '#2fae9c') + C(17, 9, 6.5, K, '#ddd') + P('M1 3h7', R, 'none', 2),
    unite: P('M3 10h14v13H3z', '#0a6050', '#2fae9c') + C(17, 9, 6.5, K, '#2fae9c') + P('M1 3h7M4 0v7', R, 'none', 2),
    intersect: P('M3 10h14v13H3z') + C(17, 9, 6.5) + F('M11 10h6v5Q12 15 11 10z', '#2fae9c') + P('M1 1l6 6M7 1L1 7', R),
    seam: P('M1 4Q5 0 10 4V20Q5 17 1 20zM14 4Q19 0 23 4V20Q19 17 14 20z', '#2848b8', 'url(#tube)', 1) + `<path d="M12 4v18" stroke="${R}" stroke-width="2" stroke-dasharray="2 1"/>`,
    splitbody: P('M1 9l5-5h17v11l-5 5H1zM1 9h17v11M18 9l5-5', '#4a80b8', '#a8ccf0', 1) + P('M12 5v15', R),
    sheet: sheetD('url(#blue)') + P('M10 1l7 8M13 1l7 8', R, 'none', 1) + F('M15 3l8 2-4 3z', '#6a98e0'),
    patch: P('M1 9l5-5h17v11l-5 5H1z', '#4a80b8', '#b8d4f4', 1) + P('M10 9l4-4h9v10l-5 5h-8z', '#c07010', '#f8b860', 1),
    trimbody: P('M1 15l12-8 10 5v4l-11 7L1 18z', '#5868a8', '#dce4fc', 1) + P('M1 15l11 5 11-8M12 20v3', '#5868a8', 'none', 1) + P('M6 15L18 9', R),
    projcurve: P('M1 14L9 9L23 16L14 23z', '#4a80c8', '#dcf0fc', 1) + P('M6 12Q13 13 16 21', '#d04010', 'none', 2) + P('M5 1L20 5', B, 'none', 2) + P('M13 4v9', R),
    delcube: box('#88a8f8', '#3858d0', '#d8e8ff', '#2848a8') + P('M1 2L12 13M9 1L3 12', K, 'none', 2),
    split: box('#78a4f0', '#3858d0', '#b8d4ff', '#385090') + F('M9 3l6 2v10l-6 2-4-2v-4l4-1z', '#f8b820') + P('M15 5v10', '#885010', 'none', 1),
    wrap: P('M1 8Q9 0 17 6L15 14Q8 9 3 15z', '#5a88c8', '#bcd8f8', 1) + P('M4 14Q9 9 15 14', '#f09020', 'none', 2) + P('M20 5v15', R) + D(20, 4, '#e06010') + D(20, 21, '#e06010'),
    copyface: P('M2 2Q6 5 10 1V12Q6 15 2 12z', '#2848b8', 'url(#tube)', 1) + P('M10 10Q16 12 22 7V20Q16 24 10 21z', '#c07810', 'url(#goldx)', 1) + P('M2 17h6', '#e05010', 'none', 3),
    draft: P('M9 11Q10 6 22 6V17L16 22H9z', '#2848b8', '#5a88e8', 1) + `<path d="M2 22V10Q4 2 12 2h9v4M2 14h7M2 22h8" fill="none" stroke="${R}" stroke-dasharray="3 1"/>`,
    blend: box('#88a8f8', '#2848c0', '#f8b040', '#284898') + P('M2 10Q3 4 9 3L20 5Q14 6 13 13z', '#b86810', '#f8a838', 1),
    flange: P('M15 2l5-1v14l-4 7H1l6-4z', '#5a88c8', '#dcecff', 1) + P('M14 6Q15 16 4 18l8 4Q21 18 20 7z', '#c06810', 'url(#gold)', 1),
    flange2: P('M15 2l5-1v14l-4 7H1l6-4z', '#5a88c8', '#dcecff', 1) + P('M17 6Q16 17 4 18l10 4Q22 17 22 7z', '#c05010', 'url(#goldx)', 1),
    chamferb: F('M0 0h24v24H0z', '#c8ecfc') + P('M1 12L16 16V24H1z', '#4a80d0', '#78a8f0', 1) + F('M16 16l8-7v15h-8z', '#4a80d8') + P('M1 11L10 2L23 7L15 16z', '#c07810', '#ffe070', 1),
    shell: P('M12 2L1 18l11 5 11-6z', '#c05030', 'none', 1) + P('M7 7l6-3 5 3v7l-5 3-6-3z', '#2848a8', '#6a90e8', 1) + P('M1 17l11-5 11 5', '#4878c8', 'none', 1),

    gparts: D(7, 7, '#999', 4) + F('M3 12h9v9H3z', '#999') + C(17, 10, 4, '#999', '#aaa') + C(16, 18, 4, '#999', '#aaa'),
    gfilter: D(7, 7, '#8c9c8c', 4) + P('M6 9l6 6', '#889', 'none', 3) + F('M11 11h12l-4 5v7h-4v-7z', '#989880'),
    crossbox: P('M1 1h22v22H1z', R) + C(10, 10, 5, K) + P('M10 1v18M1 10h18', R) + F('M11 12h11l-4 5v5h-3v-5z', '#f0c020'),
    undopick: P('M2 8Q5 1 11 6', '#101870', 'none', 3) + F('M0 5l1 8 6-5z', '#101870') + C(15, 15, 5, K) + P('M15 7v16M7 15h16', R),
    chain: F('M1 3l5-2 5 3 2 5-4 2-8-4z', '#556') + P('M9 8h5v13M14 13h6M14 21h6', '#667') + F('M16 9h6v5h-6zM16 17h6v5h-6z', '#c8b040'),
    lasso: `<path d="M3 3h18v18H3z" fill="none" stroke="#111" stroke-width="2" stroke-dasharray="3 2"/>` + D(21, 21) + D(3, 3),
    snapface: P('M2 13L9 5Q18 2 23 11V17L13 22H2z', '#555', '#e8ecf4') + P('M5 13L12 6M10 15L18 7', R) + P('M13 22V14L23 11', B),
    snapcube: box('#a8ccf8', '#4878e0', '#dcecff', '#3858b8') + P('M13 10v12', R, 'none', 2),
    snapall: F('M1 2l5 4-5 4z', '#18a030') + F('M1 14l5 4-5 4z', R) + C(14, 12, 6, '#333', '#fff', 1.5) + P('M14 2v20M5 12h18', '#555', 'none', 1) + D(14, 4, '#c8a820') + D(14, 20, '#c8a820') + D(6, 12, '#c8a820') + D(22, 12, '#c8a820') + D(14, 12, '#c8a820'),
    snapopt: C(10, 10, 6, '#444', 'none', 2) + D(10, 3, '#a89020') + D(10, 17, '#a89020') + D(3, 10, '#a89020') + D(17, 10, '#a89020') + D(10, 10, '#a89020') + P('M13 20Q22 22 21 14', '#3a9890', 'none', 4),
    endpt: P('M4 20L20 4') + D(20, 4),
    midpt: P('M4 20L20 4') + D(12, 12),
    ctrlpt: P('M3 3Q10 2 10 11T20 21') + D(10, 12),
    interpt: P('M12 2v20M2 18Q12 5 22 18') + D(12, 12, R, 2.5),
    center: C(12, 12, 10) + D(12, 12, R, 3),
    quad: C(12, 12, 8) + D(12, 4) + D(12, 20) + D(4, 12) + D(20, 12),
    existing: P('M12 2v20M2 12h20', K, 'none', 2) + D(12, 12),
    oncurve: P('M4 20L20 4') + D(6, 18, R, 2.5),
    onface: P('M3 10Q10 0 23 4L18 20Q12 12 5 21z', '#4a70b8', '#cfe2fa') + D(12, 8, R, 2.5),
    grid: P('M4 1l14 4v18L4 18zM4 7l14 4M4 13l14 4M9 2v18M13 3v18', K) + D(12, 10, R, 3),
    full: P('M1 6V1h6M17 1h6v5M1 18v5h6M17 23h6v-5', '#333', 'none', 2) + P('M4 5h16v14H4z', '#333', '#fff') + F('M7 8h10v8H7z', '#1c78d8'),

    mesh: net('#4450d8'),
    meshsel: net('#6078d8') + P('M4 13L6 6Q12 3 16 7L17 13L12 12z', '#123', '#c4dcfc'),
    ruled: P('M13 2L22 6L12 22L1 14z', G, '#fff', 1) + P('M8 7l10 6M17 4L7 18', G, 'none', 1) + P('M13 2Q19 2 22 7M1 14Q8 16 11 22', '#e84010', 'none', 2) + F('M3 4l7-2-2 5zM16 19l6-4v6z', '#e88020'),
    curves: C(10, 6, 5) + D(10, 6, '#18a030') + P('M1 17L4 12M1 17Q10 15 12 22', K) + D(4, 12) + D(1, 17) + D(12, 22) + D(7, 21, '#18802c') + P('M13 17l6-6h5l-7 8z', B, '#e8d8a0'),
    sweep: P('M2 12L5 3Q13-1 18 3V12M2 12Q10 6 12 12M11 2v9', '#e05858', '#fff', 1) + P('M8 15L18 10L22 10L12 22z', '#e05858', '#d4e8fc', 1) + P('M1 22Q9 10 23 9', '#2858b8', 'none', 1.8),
    meshred: P('M1 11L5 2L23 9L18 21L1 13zM8 4L4 14M14 6L10 17M19 8L14 19M3 7l17 7', '#6068d8', '#f0f0ff', 1.2) + P('M23 9l-3 4 3 4-5 4', R, 'none', 1.8),
    roll: P('M1 6Q10 0 23 3L20 9Q12 6 1 6z', '#3a90a8', '#88d4e0', 1) + P('M8 9h15v6h-9l-6 3z', '#b08020', '#f8d820', 1) + P('M12 15l11-4v10l-11 3z', '#e05840', '#ffb060', 1) + C(7, 13, 4, '#a07010', '#f8d830') + D(7, 13, '#a07010', 1),
    meshframe: P('M1 13L8 4Q14 5 23 10L13 21Q7 14 1 13z', '#c03040', '#e0e4fc', 2) + P('M6 11l5-5 8 5-6 5zM9 8l7 5M15 8l-6 5', '#6068d8', 'none', 1),
    angle3d: P('M3 5l6-4h11v18l-6 4h-4V10H3z', B, '#fff0e0', 1.5) + P('M3 5h11l6-4M14 5v18M6 8h6v15', R, 'none', 1.5) + F('M15 6l4-3v15l-4 3z', '#ffd860'),
    hand: P('M4 10Q10 13 14 9L13 21Q9 24 3 20z', '#6a8898', '#d8eef0', 1) + P('M9 8Q10 2 17 4L18 9Q13 8 9 9z', '#a08040', '#f4dc90', 1) + F('M17 2l6 2-1 6-5-2z', '#1838a0'),
    tube: F('M8 0h15v14L17 24H0Q1 16 8 13z', '#ff9a10') + F('M9 0h6v14Q12 18 9 23H2Q3 16 9 13z', '#ffd848') + P('M8 0v13l8 5 7-5M16 18l2 6', '#d05808', 'none', 1.2),
    ccut: diaCube + P('M13 11h9l-2 3 2 2h-9l2-2zM13 18h7l2 2-2 3h-7l2-2z', K, '#fff', 1.2),
    ccopy: diaCube + P('M10 13l4-3v3h3v10h-7z', K, '#fff', 1.2) + P('M15 13h8v9h-8z', K, '#fff', 1.2),
    cmove: diaCube + P('M15 9v14M8 16h14', '#fff', 'none', 5) + P('M15 9v14M8 16h14M13 11l2-3 2 3M13 21l2 3 2-3M10 14l-3 2 3 2M20 14l3 2-3 2', K, 'none', 1.2),
    cpull: diaCube + P('M8 20l7 3 8-3-7-2z', K, '#fff', 1.2) + P('M14 20v-5h-3l4-7 4 7h-3v5z', K, '#fff', 1.2),
    cdelete: diaCube + P('M10 12l11 11M21 10L11 22', '#fff', 'none', 5) + P('M10 12l11 11M21 10L11 22', K, 'none', 2.5),
    cyl: P('M3 5V20Q11 24 19 20V5z', '#d03828', 'url(#goldx)') + '<ellipse cx="11" cy="4.500" rx="8.500" ry="3" fill="#b878d8" stroke="#803098"/>' + P('M11 22l6-9 6 9z', K, '#fff') + P('M14.500 20l2.500-4 2.500 4z', '#e05010', 'none', 1),
    hide: C(7, 9, 4, R, 'none', 2) + P('M8 3l8 11M16 6L9 13', '#444', 'none', 2) + P('M18 3h4M20 3v15M18 18h4', K) + P('M3 21h14M3 19v4', K),

    layer: layerS + P('M12 5v11', '#e06010', 'none', 2) + F('M8 10l4 8 4-8z', '#e03010') + D(12, 5, '#e03010'),
    layercopy: layerS + P('M7 6h6v9H7zM12 10h6v9h-6z', '#4858c0', '#eef', 1),
    layerlist: P('M1 5l7-4h14l-6 4zM1 10l4-3M1 15l4-3M1 20l4-3M1 10h8M1 15h8M1 20h8', '#3a7a4a', '#d8f4d8', 1) + P('M9 8h13v15H9z', '#4858b0', '#f4f6ff', 1) + P('M11 12h3M16 12h4M11 16h3M16 16h4M11 20h3M16 20h4', '#4858b0'),
    handdia: diamond(8, 16) + P('M10 8Q12 3 18 4V9Q14 10 11 11z', '#a08040', '#f4dc90', 1) + F('M17 1l6 2-1 6-5-2z', '#1838a0'),
    palette: P('M2 7Q6 0 15 2Q22 6 19 12L13 12L12 20Q7 25 5 19L9 13Q1 13 2 7z', '#b89820', '#fbe878', 1) + D(7, 6, '#38a8d8') + D(12, 5, '#e05030') + diamond(17, 12),
    showhide: arrowG + arrowR + diamond(16, 12),
    dsel: diamond(8, 8, '#aab', '#eef') + P('M11 7v14l3-3 3 5 2-1-2-5h4z', K, '#fff', 1),
    dia1: diamond(8, 7) + pale(16, 17) + F('M2 13l5 4-5 5z', R),
    dia2: pale(8, 7) + diamond(16, 17) + F('M2 13l5 4-5 5z', '#18a030'),
    dia3: diamond(8, 7) + pale(16, 17) + F('M2 13l5 4-5 5z', R) + F('M23 2l-5 4 5 5z', '#18a030'),
    wcsdyn: P('M5 3L9 12L5 20L14 22L17 12M5 3v17M9 12h8', R, 'none', 1.2) + P('M5 3Q15 5 17 12M5 20L14 22', K, 'none', 1) + D(9, 11) + D(8, 17) + D(12, 14) + P('M4 1h3v3H4zM16 10h3v3h-3zM3 19h3v3H3zM13 21h3v3h-3z', '#622', '#ecc', 1),
    wcs1: vaxes + C(5, 20, 2.5, R, '#fff'),
    wcs2: P('M4 11v11l9-4M4 20l6 3', '#777') + P('M15 12V3M15 12h8M15 12l-5 4', R) + P('M5 7Q6 3 12 3', '#e08020', 'none', 3),
    wcs0: P('M8 15V3', B) + F('M8 0l3 5H5z', B) + P('M8 15l12-6', '#18a030') + F('M23 7l-5 0 2 4z', '#18a030') + P('M8 15l12 3', R) + '<text x="-2" y="23" font-size="7" font-weight="bold">(0,0,0)</text>',
    wcs3: vaxes + P('M12 11L21 2', '#5a88e0', 'none', 4),
    wcs4: vaxes + P('M12 1h11v11H12z', '#223', '#6088c0', 1) + F('M14 2h7v4h-7z', '#fff'),

    circline: C(9, 8, 7, '#7030a0') + D(9, 8) + P('M4 19l15 4', R) + D(4, 18) + D(19, 23) + C(20, 4, 2, '#a89810') + C(20, 9, 2.5, '#a89810') + C(21, 13, 2, '#a89810'),
    helix: '<g fill="none" stroke="#385c98" stroke-width="1.5"><ellipse cx="12" cy="6" rx="9" ry="4"/><ellipse cx="12" cy="10" rx="10" ry="4"/><ellipse cx="12" cy="14" rx="10" ry="4"/><ellipse cx="14" cy="18" rx="8" ry="4"/></g>',
    text: '<text x="12" y="20" font-size="25" font-weight="bold" text-anchor="middle" font-family="Liberation Serif, serif">A</text>',
    offsetr: P('M1 22V10L7 2Q14 1 17 5Q24 9 22 17Q20 22 16 22z', '#333', 'none', 1.3) + P('M5 18V11L9 6Q13 6 13 10Q19 11 18 15Q17 18 14 18z', R, 'none', 1.5),
    bridge: P('M7 1Q1 2 3 7Q5 9 10 7M1 22Q2 15 8 19T18 19M14 5L22 3M18 15l5-2', K) + P('M9 20l8-1V8', '#8030a0') + P('M13 8v8', R) + F('M10 12l3 6 3-6z', '#e06010'),
    bridge2: P('M7 1Q1 2 3 7Q5 9 10 7M1 22Q2 15 8 19T18 19M13 5L22 2M16 16l7-3', K) + P('M13 10v5', R) + F('M10 13l3 5 3-5z', '#e06010'),
    inter: P('M8 1l9 5v17l-9-5z', '#4a80c8', '#e8f4fc', 1) + P('M1 9l7-3 15 8-7 4z', '#4a80c8', '#cfe6fa', 1) + P('M7 8q4 5 9 7', '#d04010', 'none', 2),
    tubewrap: P('M1 4Q6 0 11 4V20Q6 23 1 20z', '#2848b8', 'url(#tube)', 1) + P('M12 12h5', '#e06010', 'none', 3) + P('M18 2Q25 12 18 22', R),
    wave: P('M2 13Q6 7 10 11T18 6V16Q14 19 11 19T3 23z', '#6048c0', '#b8b8f8', 1) + P('M5 12v9M9 11v8M13 10v9', '#6048c0', 'none', 1) + P('M16 8L20 2', '#e06010', 'none', 2),
    circtan: C(7, 7, 6) + D(7, 7, K, 1) + P('M10 22L20 10', K) + D(10, 22) + D(20, 9),
    cylinder: P('M4 4V20Q12 25 20 20V4z', '#3858c8', 'url(#tube)', 1) + '<ellipse cx="12" cy="4" rx="8" ry="3" fill="#a8c4fc" stroke="#3858c8"/>',
    wrench: page(11, 1) + P('M14 9h7M14 12h7', '#d05060') + P('M4 21L12 14', '#b89010', 'none', 5) + P('M4 21L12 14M12 10v5h5', '#f8d838', 'none', 3),
    etrim: P('M1 11h21M6 2Q18 2 18 11', K, 'none', 1.8) + P('M3 23Q5 17 11 17T19 11', G, 'none', 1) + P('M12 5l11 11', R),
    etrim2: P('M1 12h12M13 12v11', K, 'none', 1.8) + P('M13 1v11M13 12h10', G, 'none', 1) + P('M8 6l12 11', R, 'none', 2),
    esplit: P('M1 22Q11 23 11 12T21 2', K, 'none', 1.8) + P('M11 3l6 6M8 15l6 7', R, 'none', 2),
    efillet: P('M2 2h7M20 13v10', K) + P('M9 2Q20 2 20 13', R, 'none', 2) + P('M12 1h9v9', G, 'none', 1),
    estretch: P('M1 1h13L22 12v11H1z', '#444') + P('M6 1h8l8 11v11h-8', B) + P('M2 3Q13 8 13 20', G, 'none', 1) + P('M12 17h6', '#e06010', 'none', 3),
    elength: P('M1 22Q13 23 15 12', K, 'none', 1.8) + P('M15 12V2M16 11Q17 8 16 2M20 5v9M18 5l2-2 2 2M18 14l2 2 2-2', R),
    esmooth: P('M1 9Q6 3 11 6T23 1', K, 'none', 2) + P('M1 22Q13 11 23 18', R, 'none', 1.8) + P('M11 7v4', '#e06010', 'none', 2) + F('M8 10h6l-3 4z', '#e06010'),
    etemplate: C(6, 9, 5, R) + P('M6 1v17M0 9h14', '#555') + P('M11 1Q6 4 8 12T5 20', '#6088d0') + P('M10 12h13v11H10z', '#5560a8', '#fff', 1) + P('M12 16h9M12 20h9', '#333'),

    rasm: P('M5 2l3-1 4 1v4l-3 2-4-2zM2 7l3-1 4 1v4l-3 2-4-2zM8 8l3-1 4 1v4l-3 2-4-2z', '#a87810', '#ffd848', 1) + P('M14 12h10', K) + P('M6 14v10M6 19h6', B) + P('M14 18l4-2 5 1v4l-4 2-5-1z', '#a87810', '#ffd848', 1),
    rcon: F('M4 2l7 5-7 5zM20 2l-7 5 7 5z', '#1818b0') + P('M12 1v23', K, 'none', 1) + P('M1 15h9v8H1z', '#886010', '#fff030', 1) + F('M14 14l9 9h-9z', '#b81010'),
    rpart: P('M1 3v8q5 2 10 0V3q-5-2-10 0z', '#883878', '#d890c8', 1) + P('M14 10h10', K) + P('M6 14v10M6 19h6', B) + C(18, 19, 4.5, '#a02880', '#fff') + C(18, 19, 1.500, '#a02880'),
    rlib: F('M1 7h6v16H1z', '#f0a050') + F('M7 7h6v16H7z', '#30c838') + F('M13 7h6v16h-6z', '#3888e0') + P('M1 7l4-5h5l-3 5zM7 7l4-5h5l-3 5zM13 7l4-5h6l-4 5z', '#666', '#fff', 1) + F('M19 7l4-5v16l-4 5z', '#4898f0') + P('M2 11h4M2 18h4M8 11h4M8 18h4M14 11h4M14 15h4M14 19h4', '#444', 'none', 1),
    rinfo: C(9, 16, 7, '#0c58b8', '#2a88ea', 1) + P('M9 14v6M7 20h4', '#fff', 'none', 2) + D(9, 11, '#fff', 1.5) + P('M9 6Q17 6 19 16M9 1Q22 2 24 15', '#3068c0', 'none', 2),
    rweb: P('M4 1h12l5 5v17H4zM16 1v5h5', B, '#fff') + C(12, 15, 5.5, '#3080c0', '#60b8e8', 1) + F('M8 13q4-5 8 0l-2 4-3 2z', '#28983c'),
    rclock: C(12, 12, 11, '#667', '#dce8f4', 2) + P('M12 4v8h7', K, 'none', 2) + P('M12 2v2M12 20v2M2 12h2M20 12h2', K, 'none', 1),
    rlist: book + D(12, 8, '#2888e0') + D(12, 12, '#28a838') + D(12, 17, R) + P('M16 8h5M16 12h5M16 17h5', '#555'),
    rcolor: F('M2 1h9v22H2z', 'url(#rainy)') + wand,
    rmill: P('M3 3h6v16H3z', '#1860b0', '#58a8e8', 1) + P('M3 8l6-4M3 13l6-4M3 18l6-4', '#1860b0', 'none', 1) + P('M11 6h12l-4 4M3 22h8', '#2070c0') + wand,
    rpeople: D(17, 6, '#e8b060', 4.5) + F('M10 18q1-8 7-8t7 8z', '#289038') + D(7, 11, '#6a5040', 5) + D(7, 13, '#e8b890', 3) + F('M0 24q1-8 7-8t7 8z', '#9860d0'),
    rscene: book + F('M10 6h11v11H10z', '#c82838') + F('M13 6h6l-1 8h-4z', '#78b8f0') + F('M10 14h11v3H10z', '#e8c040'),

    tfolder: F('M4 3h9v18H4z', '#f8e098') + F('M11 3h3v14l4-1v7h-7z', '#e8b848'),
    tacad: F('M0 0h24v24H0z', '#2a8a78') + P('M1 23V3L11 1M13 23V11h9v12', '#fff', 'none', 1) + P('M2 21L9 4l5 17M5 15h7M22 14h-5v6h5', '#e0f8f0', 'none', 2),
    tcalc: F('M3 0h18v24H3z', '#fff') + F('M5 2h14v5H5z', '#111') + '<path d="M6 11h13M6 15h13M6 19h13" stroke="#111" stroke-width="2" stroke-dasharray="3 2"/>',
    tocam: F('M1 4h12v2h10v17H1z', '#eee') + D(9, 13, '#e86020', 4) + F('M17 9h4v11h-4z', '#e87838'),
    tphoto: P('M1 1h22v22H1z', '#fff', '#111') + F('M2 20l8-11 6 8 2-5 5 8v2H2z', '#fff')
};

const draw = name => `<svg viewBox="0 0 24 24">${icons[name]}</svg>`;

// "|" separator, "v" drop-down arrow, "V" overflow arrow, "*name" pressed, "name:text" with a label
function build(token) {
    if (token === '|') return '<span class="sep"></span>';
    if (token === 'v') return '<button class="drop" aria-label="展开"></button>';
    if (token === 'V') return '<button class="drop tail" aria-label="更多"></button>';
    const pressed = token[0] === '*';
    const [name, label] = token.replace('*', '').split(':');
    let cls = 'tool';
    if (pressed) cls += ' pressed';
    if (label) cls += ' labelled';
    if (name === 'flag') cls += ' off';
    return `<button class="${cls}" aria-label="${label || name}">${draw(name)}${label || ''}</button>`;
}

document.querySelectorAll('[data-tools]').forEach(bar => {
    bar.innerHTML = bar.dataset.tools.split(' ').map(build).join('');
});

document.querySelectorAll('[data-icon]').forEach(el => {
    el.insertAdjacentHTML('afterbegin', draw(el.dataset.icon));
});
```
